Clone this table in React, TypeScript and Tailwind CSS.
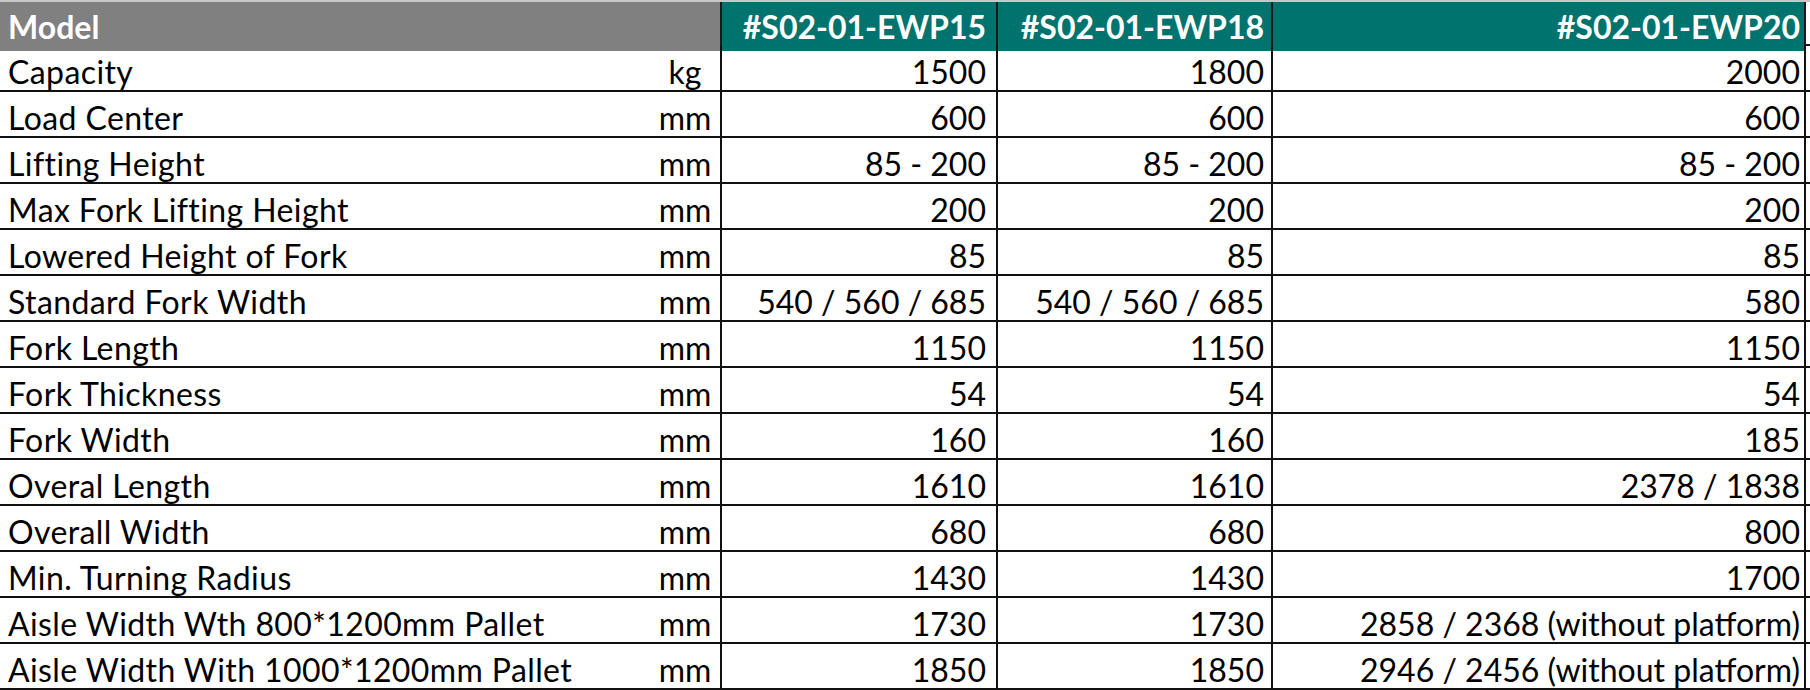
const models = ["#S02-01-EWP15", "#S02-01-EWP18", "#S02-01-EWP20"];

const specs = [
  { name: "Capacity", unit: "kg", values: ["1500", "1800", "2000"] },
  { name: "Load Center", unit: "mm", values: ["600", "600", "600"] },
  { name: "Lifting Height", unit: "mm", values: ["85 - 200", "85 - 200", "85 - 200"] },
  { name: "Max Fork Lifting Height", unit: "mm", values: ["200", "200", "200"] },
  { name: "Lowered Height of Fork", unit: "mm", values: ["85", "85", "85"] },
  { name: "Standard Fork Width", unit: "mm", values: ["540 / 560 / 685", "540 / 560 / 685", "580"] },
  { name: "Fork Length", unit: "mm", values: ["1150", "1150", "1150"] },
  { name: "Fork Thickness", unit: "mm", values: ["54", "54", "54"] },
  { name: "Fork Width", unit: "mm", values: ["160", "160", "185"] },
  { name: "Overal Length", unit: "mm", values: ["1610", "1610", "2378 / 1838"] },
  { name: "Overall Width", unit: "mm", values: ["680", "680", "800"] },
  { name: "Min. Turning Radius", unit: "mm", values: ["1430", "1430", "1700"] },
  { name: "Aisle Width Wth 800*1200mm Pallet", unit: "mm", values: ["1730", "1730", "2858 / 2368 (without platform)"] },
  { name: "Aisle Width With 1000*1200mm Pallet", unit: "mm", values: ["1850", "1850", "2946 / 2456 (without platform)"] },
];

const valuePad = ["pr-[10px]", "pr-[7px]", "pr-[4px]"];

const App = () => {
  return (
    <div
      className="w-[1810px] h-[690px] bg-white text-black text-[32px] overflow-hidden"
      style={{ fontFamily: "Lato, 'Open Sans', sans-serif" }}
    >
      <div className="grid grid-cols-[720px_276px_275px_535px] h-[46px] border-t-2 border-t-[#c8c8c8] border-b-2 border-b-[#1a1a1a] font-bold text-white">
        <div className="bg-[#808080] flex items-center pl-[8px] pt-[1px]">Model</div>
        {models.map((m, i) => (
          <div
            key={m}
            className={`bg-[#00736e] flex items-center justify-end pt-[1px] border-l-2 border-[#1a1a1a] ${valuePad[i]} ${
              i === 2 ? "border-r-2" : ""
            }`}
          >
            {m}
          </div>
        ))}
      </div>

      {specs.map((row) => (
        <div
          key={row.name}
          className="grid grid-cols-[650px_70px_276px_275px_535px] h-[46px] border-b-2 border-[#111]"
        >
          <div className="flex items-center pl-[8px] pt-[2px] whitespace-nowrap tracking-[0.4px]">{row.name}</div>
          <div className="flex items-center justify-center pt-[2px]">{row.unit}</div>
          {row.values.map((v, i) => (
            <div
              key={i}
              className={`flex items-center justify-end pt-[2px] whitespace-nowrap border-l-2 border-[#111] ${valuePad[i]} ${
                i === 2 ? "border-r-2" : ""
              }`}
            >
              {v}
            </div>
          ))}
        </div>
      ))}
    </div>
  );
};

export default App;
